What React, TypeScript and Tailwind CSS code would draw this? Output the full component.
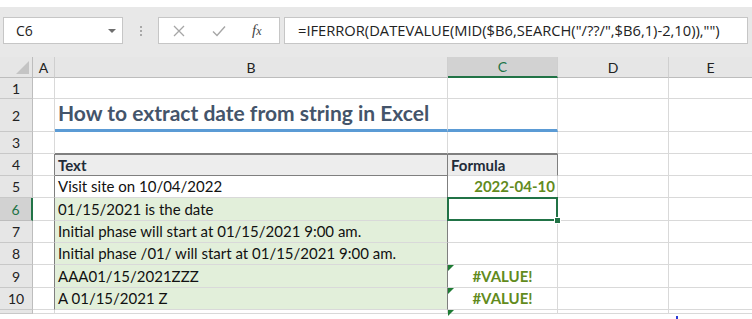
import React from 'react';

const GRID = 'border-[#d9d9d9]';

type RowSpec = {
  n: string;
  h: string;
  active?: boolean;
};

const rows: RowSpec[] = [
  { n: '1', h: 'h-[21px]' },
  { n: '2', h: 'h-[33px]' },
  { n: '3', h: 'h-[22px]' },
  { n: '4', h: 'h-[22px]' },
  { n: '5', h: 'h-[22px]' },
  { n: '6', h: 'h-[23px]', active: true },
  { n: '7', h: 'h-[22px]' },
  { n: '8', h: 'h-[22px]' },
  { n: '9', h: 'h-[23px]' },
  { n: '10', h: 'h-[22px]' },
  { n: '', h: 'h-[4px]' },
];

const bText: Record<string, string> = {
  '2': 'How to extract date from string in Excel',
  '4': 'Text',
  '5': 'Visit site on 10/04/2022',
  '6': '01/15/2021 is the date',
  '7': 'Initial phase will start at 01/15/2021 9:00 am.',
  '8': 'Initial phase /01/ will start at 01/15/2021 9:00 am.',
  '9': 'AAA01/15/2021ZZZ',
  '10': 'A 01/15/2021 Z',
};

function ErrorMark() {
  return (
    <span className="absolute left-0 top-0 h-0 w-0 border-t-[6px] border-r-[6px] border-t-[#1e7b34] border-r-transparent"></span>
  );
}

function SheetRow({ row }: { row: RowSpec }) {
  const n = row.n;
  const num = Number(n);
  const inTable = num >= 4 && num <= 10;
  const green = num >= 6 && num <= 10;
  const isTitle = n === '2';
  const isHead = n === '4';

  const bBorder = isTitle
    ? 'border-b-[3px] border-b-[#5b9bd5]'
    : isHead
      ? 'border-b border-b-[#7f7f7f] border-t border-t-[#7f7f7f]'
      : num === 3
        ? 'border-b border-b-[#7f7f7f]'
        : `border-b ${GRID}`;

  return (
    <div className={`flex ${row.h}`}>
      <div
        className={`flex w-[33px] shrink-0 items-center justify-center border-b border-r text-[14px] ${
          row.active
            ? 'border-b-[#bdbdbd] border-r-2 border-r-[#217346] bg-[#d2d2d2] text-[#217346]'
            : 'border-b-[#c8c8c8] border-r-[#bdbdbd] bg-[#e6e6e6] text-[#222]'
        }`}
      >
        {n}
      </div>
      <div
        className={`w-[22px] shrink-0 border-b border-r ${GRID} ${inTable ? 'border-r-[#7f7f7f]' : ''}`}
      ></div>
      <div
        className={`flex w-[393px] shrink-0 items-center border-r pl-[3px] ${bBorder} ${
          inTable ? 'border-r-[#7f7f7f]' : 'border-r-[#d9d9d9]'
        } ${green ? 'bg-[#e2efda]' : ''} ${isHead ? 'bg-[#ededed] font-bold text-[#222b38]' : ''} ${
          isTitle ? 'items-end pb-[1px] text-[21px] font-bold text-[#44546a]' : 'text-[15px] text-[#111]'
        }`}
      >
        {bText[n] ?? ''}
      </div>
      <div
        className={`relative flex w-[110px] shrink-0 items-center border-r ${row.active ? 'z-20' : 'z-10'} ${
          isTitle ? 'border-b-[3px] border-b-[#5b9bd5]' : `border-b ${GRID}`
        } ${isHead ? 'border-t border-t-[#7f7f7f] border-r-[#7f7f7f] bg-[#ededed] pl-[3px] text-[15px] font-bold text-[#222b38]' : 'border-r-[#d9d9d9]'} ${
          num === 3 ? 'border-b-[#7f7f7f]' : ''
        }`}
      >
        {isHead && 'Formula'}
        {n === '5' && (
          <span className="ml-auto pr-[2px] text-[15px] font-bold text-[#628b1d]">2022-04-10</span>
        )}
        {row.active && (
          <>
            <span className="absolute -left-[1px] -right-[1px] -top-[1px] -bottom-[1px] border-2 border-[#217346]"></span>
            <span className="absolute -bottom-[4px] -right-[4px] h-[7px] w-[7px] border border-white bg-[#217346]"></span>
          </>
        )}
        {(n === '9' || n === '10') && (
          <>
            <ErrorMark />
            <span className="w-full text-center text-[15px] font-bold text-[#628b1d]">#VALUE!</span>
          </>
        )}
        {n === '' && <ErrorMark />}
      </div>
      <div className={`w-[111px] shrink-0 border-b border-r ${GRID}`}></div>
      <div className={`flex-1 border-b ${GRID}`}></div>
    </div>
  );
}

export default function App() {
  return (
    <div className="relative h-[319px] w-[752px] overflow-hidden bg-white font-['Lato',sans-serif]">
      <div className="h-[7px] bg-white"></div>
      {/* formula bar */}
      <div className="flex h-[50px] items-start bg-[#e8e8e8] pt-[10px]">
        <div className="ml-[3px] flex h-[27px] w-[120px] items-center border border-[#c6c6c6] bg-white pl-[12px] pr-[6px] font-['Open_Sans',sans-serif] text-[14px] text-[#222]">
          C6
          <span className="ml-auto h-0 w-0 border-x-[4px] border-t-[4px] border-x-transparent border-t-[#6e6e6e]"></span>
        </div>
        <div className="ml-[17px] mt-[9px] flex flex-col gap-[2px]">
          <span className="h-[2px] w-[2px] bg-[#a8a8a8]"></span>
          <span className="h-[2px] w-[2px] bg-[#a8a8a8]"></span>
          <span className="h-[2px] w-[2px] bg-[#a8a8a8]"></span>
        </div>
        <div className="ml-[16px] flex h-[27px] w-[122px] items-center border border-[#c6c6c6] bg-white">
          <svg className="ml-[14px]" width="12" height="12" viewBox="0 0 12 12">
            <path d="M1 1 L11 11 M11 1 L1 11" stroke="#a6a6a6" strokeWidth="1.3" fill="none" />
          </svg>
          <svg className="ml-[27px]" width="14" height="12" viewBox="0 0 14 12">
            <path d="M1 6.5 L5 10.5 L13 1.5" stroke="#a6a6a6" strokeWidth="1.4" fill="none" />
          </svg>
          <span className="ml-[26px] font-['Liberation_Serif',serif] text-[15px] italic text-[#444]">
            f<span className="text-[12px]">x</span>
          </span>
        </div>
        <div className="ml-[4px] mr-[4px] flex h-[27px] flex-1 items-center border border-[#c6c6c6] bg-white pl-[13px] font-['Open_Sans',sans-serif] text-[14.7px] text-[#222]">
          =IFERROR(DATEVALUE(MID($B6,SEARCH("/??/",$B6,1)-2,10)),"")
        </div>
      </div>
      {/* column headers */}
      <div className="flex h-[21px] bg-[#e6e6e6] text-[14px] text-[#222]">
        <div className="relative w-[33px] shrink-0 border-b border-r border-b-[#bdbdbd] border-r-[#bdbdbd]">
          <span className="absolute bottom-[3px] right-[3px] h-0 w-0 border-b-[13px] border-l-[13px] border-b-[#c4c4c4] border-l-transparent"></span>
        </div>
        <div className="flex w-[22px] shrink-0 items-center justify-center border-b border-r border-b-[#bdbdbd] border-r-[#cfcfcf]">A</div>
        <div className="flex w-[393px] shrink-0 items-center justify-center border-b border-r border-b-[#bdbdbd] border-r-[#cfcfcf]">B</div>
        <div className="flex w-[110px] shrink-0 items-center justify-center border-b-2 border-r border-b-[#217346] border-r-[#cfcfcf] bg-[#d2d2d2] text-[#217346]">C</div>
        <div className="flex w-[111px] shrink-0 items-center justify-center border-b border-r border-b-[#bdbdbd] border-r-[#cfcfcf]">D</div>
        <div className="flex flex-1 items-center justify-center border-b border-b-[#bdbdbd]">E</div>
      </div>
      {rows.map((row) => (
        <SheetRow key={row.n || 'last'} row={row} />
      ))}
      <span className="absolute left-[676px] top-[316px] h-[3px] w-[2px] bg-[#2a3ad6]"></span>
    </div>
  );
}
